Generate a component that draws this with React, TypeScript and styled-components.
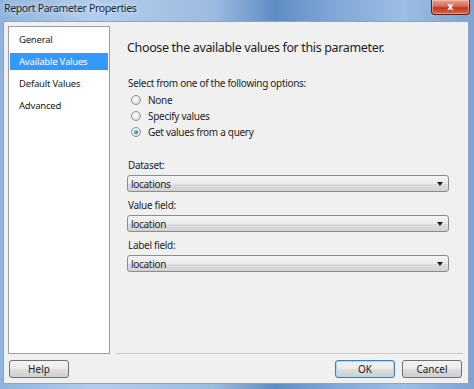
import React from "react";
import styled, { createGlobalStyle, css } from "styled-components";

const GlobalStyle = createGlobalStyle`
  html, body {
    margin: 0;
    padding: 0;
    background: #6a93c6;
  }
  body {
    font-family: "Noto Sans", "Liberation Sans", sans-serif;
    -webkit-font-smoothing: antialiased;
  }
`;

const Window = styled.div`
  width: 474px;
  height: 389px;
  display: flex;
  flex-direction: column;
  box-sizing: border-box;
  padding: 0 5px 5px 3px;
  background: linear-gradient(90deg, #8fb3dd 0%, #b3cdec 20%, #9cbbe0 45%, #5f8cc4 58%, #7fa6d6 70%, #9dbde3 85%, #7ea3d2 100%);
`;

const TitleBar = styled.div`
  height: 21px;
  display: flex;
  align-items: flex-start;
  justify-content: space-between;
  margin-left: -3px;
  margin-right: -5px;
  padding-left: 4px;
  padding-right: 4px;
`;

const Title = styled.span`
  font-size: 10.5px;
  letter-spacing: -0.35px;
  line-height: 17px;
  color: #1c2a3a;
  text-shadow: 0 0 6px rgba(255, 255, 255, 0.9);
`;

const CloseButton = styled.div`
  width: 37px;
  height: 14px;
  border: 1px solid #5b2118;
  border-top: none;
  border-radius: 0 0 4px 4px;
  background: linear-gradient(#e8a493 0%, #d8664f 45%, #c1371f 55%, #d06a4f 100%);
  color: #fff;
  font-size: 10px;
  font-weight: 700;
  line-height: 12px;
  text-align: center;
  box-shadow: inset 0 0 0 1px rgba(255, 210, 190, 0.5);
`;

const Client = styled.div`
  flex: 1;
  display: flex;
  flex-direction: column;
  background: #f0f0f0;
  border: 1px solid #8aa5c6;
  box-sizing: border-box;
`;

const Body = styled.div`
  flex: 1;
  display: flex;
  align-items: stretch;
  padding: 4px 5px 0 4px;
`;

const Nav = styled.div`
  width: 100px;
  background: #fff;
  border: 1px solid #9a9fa6;
  padding-top: 4px;
`;

const NavItem = styled.div<{ $active?: boolean }>`
  height: 17px;
  margin: 0 1px 5px 1px;
  padding-left: 9px;
  font-size: 9.5px;
  letter-spacing: -0.2px;
  line-height: 17px;
  color: #1a1a1a;
  ${(p) =>
    p.$active &&
    css`
      background: #3399ff;
      color: #fff;
    `}
`;

const Content = styled.div`
  flex: 1;
  display: flex;
  flex-direction: column;
  padding-left: 6px;
`;

const Inner = styled.div`
  flex: 1;
  padding: 0 14px 0 11px;
  border-bottom: 1px solid #c9c9c9;
`;

const Heading = styled.div`
  margin-top: 13px;
  font-size: 12.5px;
  letter-spacing: -0.35px;
  line-height: 18px;
  color: #1e1e1e;
`;

const Label = styled.div<{ $top: number }>`
  margin-top: ${(p) => p.$top}px;
  padding-left: 1px;
  font-size: 10px;
  letter-spacing: -0.3px;
  line-height: 14px;
  color: #1e1e1e;
`;

const RadioGroup = styled.div`
  display: flex;
  flex-direction: column;
  margin-top: 2px;
  padding-left: 4px;
`;

const RadioRow = styled.div`
  display: flex;
  align-items: center;
  height: 16px;
  gap: 7px;
  font-size: 10px;
  letter-spacing: -0.3px;
  color: #1e1e1e;
`;

const RadioDot = styled.span<{ $checked?: boolean }>`
  width: 10px;
  height: 10px;
  border-radius: 50%;
  border: 1px solid #8e8f8f;
  background: radial-gradient(circle at 40% 35%, #ffffff 0%, #e6e6e6 60%, #cfcfcf 100%);
  position: relative;
  box-sizing: border-box;
  ${(p) =>
    p.$checked &&
    css`
      &::after {
        content: "";
        position: absolute;
        left: 2px;
        top: 2px;
        width: 4px;
        height: 4px;
        border-radius: 50%;
        background: radial-gradient(circle at 40% 35%, #7fc4f0 0%, #1c5e94 80%);
      }
    `}
`;

const Select = styled.div`
  margin-top: 3px;
  height: 17px;
  display: flex;
  align-items: center;
  justify-content: space-between;
  padding: 0 5px 0 3px;
  border: 1px solid #8c8c8c;
  border-radius: 3px;
  background: linear-gradient(#f4f4f4 0%, #ebebeb 50%, #dddddd 51%, #d2d2d2 100%);
  font-size: 10px;
  letter-spacing: -0.3px;
  color: #1e1e1e;
  box-sizing: border-box;
`;

const Arrow = styled.span`
  width: 0;
  height: 0;
  border-left: 3.5px solid transparent;
  border-right: 3.5px solid transparent;
  border-top: 4px solid #1a1a1a;
`;

const Footer = styled.div`
  display: flex;
  align-items: center;
  height: 29px;
  padding: 0 6px 0 5px;
  gap: 7px;
`;

const Spacer = styled.div`
  flex: 1;
`;

const Button = styled.div<{ $default?: boolean }>`
  width: 60px;
  height: 18px;
  box-sizing: border-box;
  border: 1px solid #707070;
  border-radius: 3px;
  background: linear-gradient(#f2f2f2 0%, #ebebeb 50%, #dddddd 51%, #cfcfcf 100%);
  font-size: 10px;
  line-height: 16px;
  text-align: center;
  color: #1e1e1e;
  ${(p) =>
    p.$default &&
    css`
      border-color: #3c7fb1;
      box-shadow: inset 0 0 0 1px #a6d8f7;
    `}
`;

export default function App() {
  return (
    <>
      <GlobalStyle />
      <Window>
        <TitleBar>
          <Title>Report Parameter Properties</Title>
          <CloseButton>x</CloseButton>
        </TitleBar>
        <Client>
          <Body>
            <Nav>
              <NavItem>General</NavItem>
              <NavItem $active>Available Values</NavItem>
              <NavItem>Default Values</NavItem>
              <NavItem>Advanced</NavItem>
            </Nav>
            <Content>
              <Inner>
                <Heading>Choose the available values for this parameter.</Heading>
                <Label $top={19}>Select from one of the following options:</Label>
                <RadioGroup>
                  <RadioRow>
                    <RadioDot />
                    None
                  </RadioRow>
                  <RadioRow>
                    <RadioDot />
                    Specify values
                  </RadioRow>
                  <RadioRow>
                    <RadioDot $checked />
                    Get values from a query
                  </RadioRow>
                </RadioGroup>
                <Label $top={18}>Dataset:</Label>
                <Select>
                  locations
                  <Arrow />
                </Select>
                <Label $top={6}>Value field:</Label>
                <Select>
                  location
                  <Arrow />
                </Select>
                <Label $top={6}>Label field:</Label>
                <Select>
                  location
                  <Arrow />
                </Select>
              </Inner>
            </Content>
          </Body>
          <Footer>
            <Button>Help</Button>
            <Spacer />
            <Button $default>OK</Button>
            <Button>Cancel</Button>
          </Footer>
        </Client>
      </Window>
    </>
  );
}
